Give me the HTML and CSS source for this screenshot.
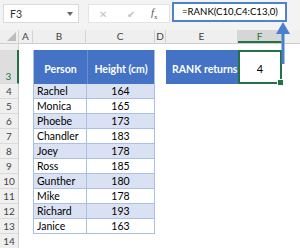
FILE: index.html
```html
<!DOCTYPE html>
<html lang="en">
<head>
  <meta charset="UTF-8">
  <title>RANK function</title>
  <link rel="stylesheet" href="styles.css">
</head>
<body>
  <div class="toolbar">
    <div class="namebox"><span>F3</span><span class="caret"></span></div>
    <div class="buttons">
      <span class="btn cancel">&#x2715;</span>
      <span class="btn enter">&#x2714;</span>
      <span class="btn fx"><i>f</i><sub>x</sub></span>
    </div>
    <div class="formula">=RANK(C10,C4:C13,0)</div>
  </div>

  <div class="colheads">
    <div class="corner"><span class="tri"></span></div>
    <div class="ch col-a">A</div>
    <div class="ch col-b">B</div>
    <div class="ch col-c">C</div>
    <div class="ch col-d">D</div>
    <div class="ch col-e">E</div>
    <div class="ch col-f selected">F</div>
    <div class="ch col-g"></div>
  </div>

  <div class="body">
    <div class="rowheads">
      <div class="rh row-2"></div>
      <div class="rh row-3 selected">3</div>
      <div class="rh">4</div>
      <div class="rh">5</div>
      <div class="rh">6</div>
      <div class="rh">7</div>
      <div class="rh">8</div>
      <div class="rh">9</div>
      <div class="rh">10</div>
      <div class="rh">11</div>
      <div class="rh">12</div>
      <div class="rh">13</div>
      <div class="rh">14</div>
    </div>

    <div class="cells">
      <div class="table">
        <div class="th">Person</div>
        <div class="th">Height (cm)</div>
        <div class="td name band">Rachel</div><div class="td num band">164</div>
        <div class="td name">Monica</div><div class="td num">165</div>
        <div class="td name band">Phoebe</div><div class="td num band">173</div>
        <div class="td name">Chandler</div><div class="td num">183</div>
        <div class="td name band">Joey</div><div class="td num band">178</div>
        <div class="td name">Ross</div><div class="td num">185</div>
        <div class="td name band">Gunther</div><div class="td num band">180</div>
        <div class="td name">Mike</div><div class="td num">178</div>
        <div class="td name band">Richard</div><div class="td num band">193</div>
        <div class="td name">Janice</div><div class="td num">163</div>
      </div>
      <div class="rank">RANK returns</div>
      <div class="result">4</div>
    </div>
  </div>

  <svg class="arrow" width="20" height="46" viewBox="0 0 20 46">
    <line x1="10" y1="10" x2="10" y2="42" stroke="#4a7fd0" stroke-width="3"/>
    <polygon points="10,0 3,12 17,12" fill="#4a7fd0"/>
  </svg>
</body>
</html>
```

FILE: styles.css
```css
:root {
  --azul: #4472c4;
  --faixa: #d9e1f2;
  --borda: #a9bfe6;
  --verde: #217346;
  --cab: #efefef;
  --linha: #d4d4d4;
}
* {
  margin: 0;
  padding: 0;
  box-sizing: border-box;
}
body {
  width: 300px;
  height: 248px;
  overflow: hidden;
  position: relative;
  background: #fff;
  font-family: Lato, 'Liberation Sans', sans-serif;
  color: #000;
}
.toolbar {
  height: 30px;
  background: #f3f3f3;
  display: flex;
  align-items: flex-start;
  padding-top: 2px;
}
.namebox {
  margin: 2px 0 0 3px;
  width: 76px;
  height: 19px;
  background: #fff;
  border: 1px solid #dadada;
  display: flex;
  align-items: center;
  justify-content: space-between;
  padding: 0 5px 0 6px;
  font-size: 10.5px;
  color: #333;
}
.caret {
  border-left: 3px solid transparent;
  border-right: 3px solid transparent;
  border-top: 4px solid #666;
}
.buttons {
  margin: 2px 0 0 9px;
  width: 82px;
  height: 19px;
  background: #fff;
  border: 1px solid #e4e4e4;
  display: flex;
  align-items: center;
  color: #c2c2c2;
  font-size: 10px;
}
.btn {
  display: inline-block;
  text-align: center;
}
.cancel {
  margin-left: 9px;
  width: 10px;
}
.enter {
  margin-left: 18px;
  width: 10px;
}
.fx {
  margin-left: 15px;
  color: #555;
  font-family: 'Liberation Serif', serif;
  font-size: 11px;
}
.fx sub {
  font-size: 7px;
}
.formula {
  margin-left: 2px;
  width: 115px;
  height: 20px;
  border: 2px solid #4f82cf;
  background: #fff;
  font-size: 9.6px;
  line-height: 16px;
  padding-left: 8px;
  white-space: nowrap;
  overflow: hidden;
}
.colheads {
  display: flex;
  height: 14px;
  background: var(--cab);
  border-bottom: 1px solid #cfcfcf;
}
.corner {
  width: 19px;
  border-right: 1px solid var(--linha);
  position: relative;
}
.tri {
  position: absolute;
  right: 2px;
  bottom: 2px;
  width: 0;
  height: 0;
  border-left: 9px solid transparent;
  border-bottom: 9px solid #bdbdbd;
}
.ch {
  border-right: 1px solid var(--linha);
  font-size: 10px;
  color: #444;
  text-align: center;
  line-height: 13px;
}
.col-a { width: 14px; }
.col-b { width: 53px; }
.col-c { width: 69px; }
.col-d { width: 11px; }
.col-e { width: 72px; }
.col-f { width: 44px; }
.col-g { flex: 1; border-right: none; }
.ch.selected {
  background: #d6d6d6;
  color: var(--verde);
  border-bottom: 2px solid var(--verde);
}
.body {
  display: flex;
}
.rowheads {
  width: 19px;
  background: var(--cab);
  border-right: 1px solid #cfcfcf;
  display: flex;
  flex-direction: column;
}
.rh {
  height: 15px;
  border-bottom: 1px solid #dadada;
  font-size: 10px;
  color: #444;
  text-align: center;
  display: flex;
  align-items: flex-end;
  justify-content: center;
  padding-bottom: 1px;
}
.rh.row-2 {
  height: 6px;
  border-bottom: none;
}
.rh.row-3 {
  height: 34px;
}
.rh.selected {
  background: #dedede;
  color: var(--verde);
  border-right: 2px solid var(--verde);
  margin-right: -1px;
}
.cells {
  flex: 1;
  display: grid;
  grid-template-columns: 14px 53px 69px 11px 72px 44px 1fr;
  grid-template-rows: 6px 34px repeat(11, 15px);
}
.table {
  grid-column: 2 / 4;
  grid-row: 2 / 13;
  display: grid;
  grid-template-columns: 53px 1fr;
  grid-template-rows: 34px repeat(10, 15px);
  border-left: 1px solid var(--borda);
  border-right: 1px solid var(--borda);
}
.th {
  background: var(--azul);
  color: #fff;
  font-weight: bold;
  font-size: 10.5px;
  display: flex;
  align-items: center;
  justify-content: center;
  padding-top: 3px;
}
.th + .th {
  border-left: 1px solid #6d8fd0;
}
.td {
  font-size: 10.5px;
  border-bottom: 1px solid var(--borda);
  display: flex;
  align-items: center;
}
.td.name {
  padding-left: 3px;
  border-right: 1px solid var(--borda);
}
.td.num {
  justify-content: center;
}
.td.band {
  background: var(--faixa);
}
.rank {
  grid-column: 5;
  grid-row: 2;
  background: var(--azul);
  color: #fff;
  font-weight: bold;
  font-size: 10.5px;
  display: flex;
  align-items: center;
  padding: 3px 0 0 6px;
  white-space: nowrap;
}
.result {
  grid-column: 6;
  grid-row: 2;
  border: 2px solid var(--verde);
  font-size: 11px;
  display: flex;
  align-items: center;
  justify-content: center;
  padding-top: 2px;
  position: relative;
}
.result::after {
  content: '';
  position: absolute;
  right: -4px;
  bottom: -4px;
  width: 5px;
  height: 5px;
  background: var(--verde);
  border: 1px solid #fff;
}
.arrow {
  position: absolute;
  left: 273px;
  top: 22px;
}
```
